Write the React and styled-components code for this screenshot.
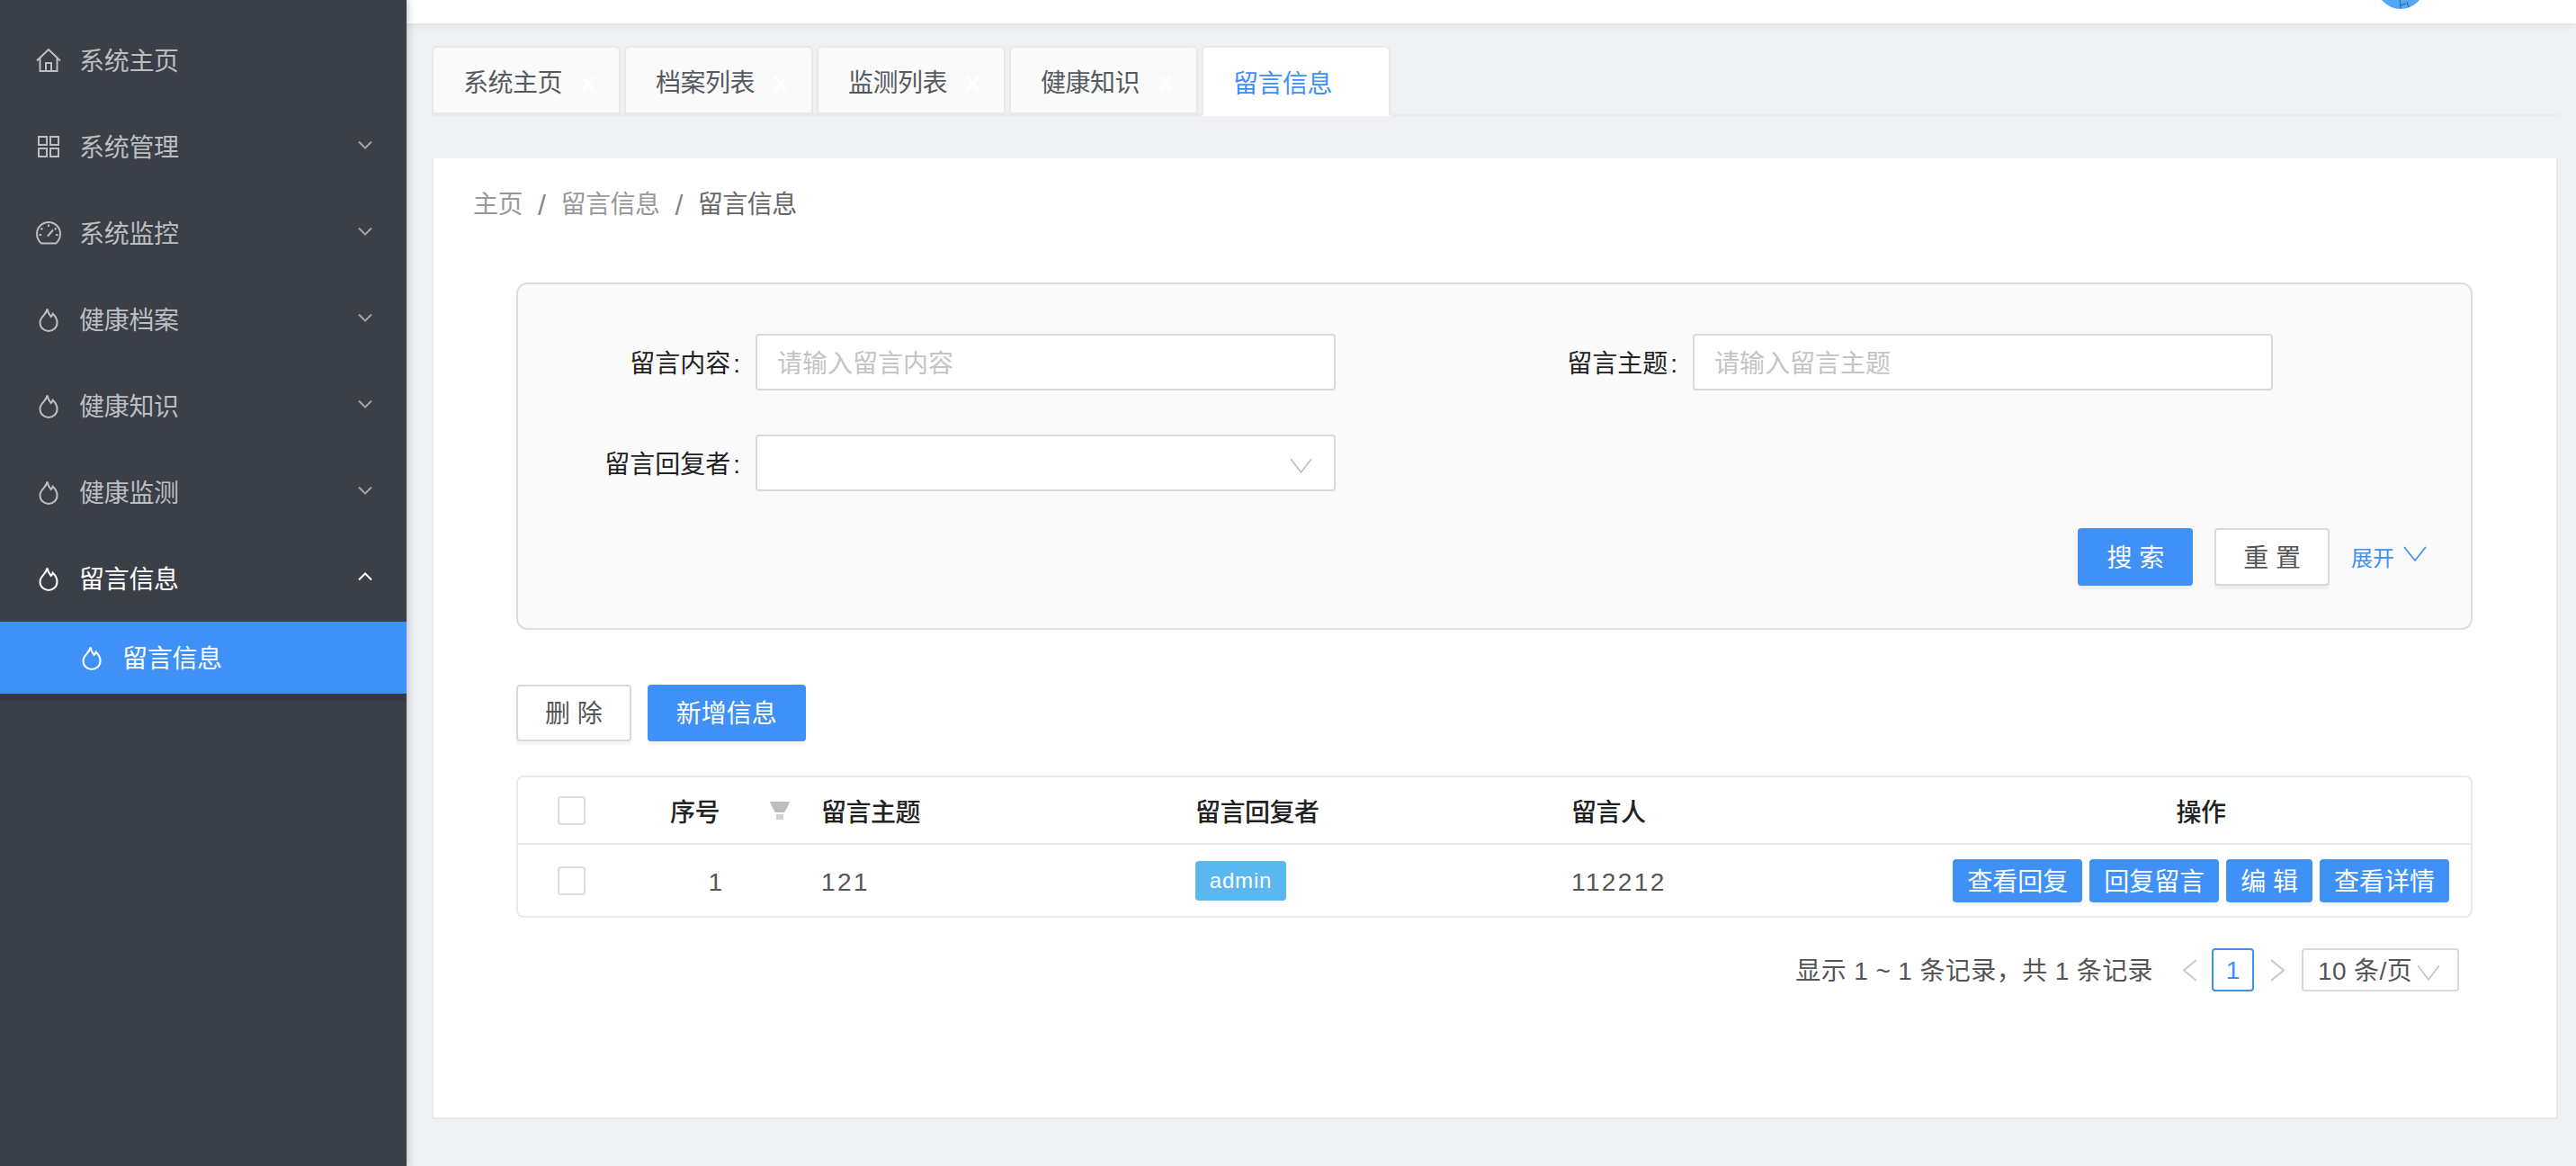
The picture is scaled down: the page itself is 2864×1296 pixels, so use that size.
import React from "react";
import styled, { createGlobalStyle } from "styled-components";

const GlobalStyle = createGlobalStyle`
  html, body {
    margin: 0;
    padding: 0;
    background: #f0f1f5;
  }
  body {
    font-family: "Liberation Sans", "Noto Sans CJK SC", sans-serif;
    font-size: 28px;
    overflow: hidden;
  }
  * {
    box-sizing: border-box;
  }
`;

const Layout = styled.div`
  display: flex;
  width: 2864px;
  height: 1296px;
  overflow: hidden;
`;

const Sidebar = styled.aside`
  flex: 0 0 452px;
  position: relative;
  z-index: 2;
  padding-top: 19px;
  background: #3a3f48;
  box-shadow: 2px 0 8px rgba(29, 35, 41, 0.22);
`;

const NavItem = styled.div`
  display: flex;
  align-items: center;
  height: 96px;
  padding: 0 38px 0 40px;
  color: ${(props) => (props.open ? "#fff" : "#bcbec2")};
  line-height: 1;
`;

const NavIcon = styled.span`
  display: flex;
  justify-content: center;
  flex: 0 0 28px;
  margin-right: 20px;
`;

const NavText = styled.span`
  flex: 1;
  padding-top: 3px;
  letter-spacing: -0.3px;
`;

const Chevron = styled.svg`
  width: 16px;
  height: 10px;
  margin-top: -4px;
  transform: ${(props) => (props.up ? "rotate(180deg)" : "none")};
`;

const SubItem = styled.div`
  display: flex;
  align-items: center;
  height: 80px;
  padding-left: 91px;
  background: #3f90f7;
  color: #fff;
  line-height: 1;
  box-shadow: 0 8px 0 #363b43;

  svg {
    margin-right: 23px;
  }
`;

const Main = styled.div`
  flex: 1;
  min-width: 0;
  display: flex;
  flex-direction: column;
`;

const Header = styled.header`
  flex: 0 0 26px;
  display: flex;
  justify-content: flex-end;
  padding-right: 168px;
  overflow: hidden;
  position: relative;
  z-index: 1;
  background: #fff;
  box-shadow: 0 2px 8px rgba(0, 0, 0, 0.08);
`;

const Avatar = styled.svg`
  flex: 0 0 54px;
  width: 54px;
  height: 54px;
  margin-top: -44px;
`;

const TabBar = styled.nav`
  display: flex;
  gap: 4px;
  height: 78px;
  margin: 25px 20px 0 28px;
  border-bottom: 2px solid #e8e9eb;
`;

const Tab = styled.div`
  display: flex;
  align-items: center;
  width: 210px;
  height: ${(props) => (props.active ? "78px" : "76px")};
  padding: 8px 0 0 33px;
  border: 2px solid #e8e9eb;
  border-bottom-color: ${(props) => (props.active ? "#fff" : "#e8e9eb")};
  border-radius: 6px 6px 0 0;
  background: ${(props) => (props.active ? "#fff" : "#fafafa")};
  color: ${(props) => (props.active ? "#3f90f7" : "#555a60")};
  line-height: 1;
  letter-spacing: -0.5px;
`;

const TabClose = styled.svg`
  width: 15px;
  height: 18px;
  margin-left: 21px;
`;

const Card = styled.section`
  flex: 0 0 1068px;
  margin: 47px 20px 0 28px;
  padding: 0 0 0 45px;
  border: 2px solid #e8e9eb;
  border-top: 0;
  background: #fff;
`;

const Breadcrumb = styled.div`
  display: flex;
  align-items: center;
  height: 100px;
  margin-left: -1px;
  padding-top: 4px;
  color: #999;
  line-height: 1;
  letter-spacing: -0.5px;

  b {
    font-weight: 400;
    color: #666;
  }
  i {
    font-style: normal;
    font-size: 32px;
    margin: 0 17px;
    color: #888;
  }
`;

const Panel = styled.div`
  width: 2175px;
  height: 386px;
  margin: 38px 0 0 47px;
  padding: 55px 49px 0 0;
  border: 2px solid #ddd;
  border-radius: 12px;
  background: #fafafa;
`;

const FormGrid = styled.div`
  display: grid;
  grid-template-columns: 1042px 1042px;
  row-gap: 49px;
`;

const Field = styled.label`
  display: flex;
  align-items: center;
  height: 63px;
`;

const FieldLabel = styled.span`
  flex: 0 0 247px;
  margin-right: 17px;
  padding-top: 5px;
  text-align: right;
  color: #222;
  line-height: 1;

  em {
    font-style: normal;
    margin-left: 3px;
  }
`;

const TextInput = styled.input`
  width: 645px;
  height: 63px;
  padding: 5px 22px 0;
  border: 2px solid #d9d9d9;
  border-radius: 4px;
  background: #fff;
  font: inherit;
  outline: none;

  &::placeholder {
    color: #c4c4c4;
    opacity: 1;
  }
`;

const SelectBox = styled.div`
  display: flex;
  align-items: center;
  justify-content: flex-end;
  width: 645px;
  height: 63px;
  padding: 5px 24px 0 0;
  border: 2px solid #d9d9d9;
  border-radius: 4px;
  background: #fff;
`;

const FormActions = styled.div`
  display: flex;
  align-items: center;
  justify-content: flex-end;
  margin-top: 41px;
`;

const Button = styled.button`
  display: inline-flex;
  align-items: center;
  justify-content: center;
  height: ${(props) => props.h || 64}px;
  padding: 3px ${(props) => props.pad || (props.primary ? 32 : 30)}px 0;
  margin-right: ${(props) => props.gap || 0}px;
  border: ${(props) => (props.primary ? "0" : "2px solid #d9d9d9")};
  border-radius: 4px;
  background: ${(props) => (props.primary ? "#3f90f7" : "#fff")};
  color: ${(props) => (props.primary ? "#fff" : "#555")};
  font: inherit;
  line-height: 1;
  white-space: pre;
  box-shadow: 0 4px 0 rgba(0, 0, 0, 0.04);
`;

const ExpandLink = styled.span`
  display: flex;
  align-items: center;
  margin-left: 24px;
  color: #3f90f7;
  font-size: 24px;
  line-height: 1;

  b {
    font-weight: 400;
    padding-top: 3px;
  }
  svg {
    margin-left: 10px;
    margin-top: -8px;
  }
`;

const Toolbar = styled.div`
  display: flex;
  margin: 61px 0 0 47px;
`;

const Table = styled.div`
  width: 2175px;
  margin: 38px 0 0 47px;
  border: 2px solid #e8e9eb;
  border-radius: 8px;
`;

const TableRow = styled.div`
  display: grid;
  grid-template-columns: 124px 213px 416px 418px 400px 1fr;
  align-items: center;
  height: ${(props) => props.h}px;
  padding-top: ${(props) => (props.head ? 0 : 1)}px;
  border-bottom: ${(props) => (props.head ? "2px solid #e8e9eb" : "0")};
  color: ${(props) => (props.head ? "#222" : "#555")};
  font-weight: ${(props) => (props.head ? 500 : 400)};
  line-height: 1;
`;

const CheckCell = styled.div`
  padding-left: 44px;
`;

const CheckBox = styled.span`
  display: block;
  width: 31px;
  height: 32px;
  border: 2px solid #dcdee2;
  border-radius: 4px;
  background: #fff;
`;

const IndexCell = styled.div`
  display: flex;
  align-items: center;

  span {
    flex: 0 0 ${(props) => (props.head ? 100 : 103)}px;
    padding-top: ${(props) => (props.head ? 6 : 4)}px;
    text-align: right;
    letter-spacing: ${(props) => (props.head ? "-0.5px" : "0")};
  }
  svg {
    margin-left: 56px;
  }
`;

const HeadCell = styled.div`
  padding-top: 6px;
  letter-spacing: -0.5px;
  text-align: ${(props) => (props.center ? "center" : "left")};
`;

const NumCell = styled.div`
  padding-top: 4px;
  letter-spacing: 2.4px;
`;

const Tag = styled.span`
  display: inline-flex;
  align-items: center;
  justify-content: center;
  width: 101px;
  height: 44px;
  border-radius: 4px;
  background: #5bb7f0;
  color: #fff;
  font-size: 24px;
  letter-spacing: 0.8px;
`;

const TagCell = styled.div`
  display: flex;
`;

const ActionCell = styled.div`
  display: flex;
  justify-content: flex-end;
  gap: 8px;
  padding-right: 24px;
`;

const Pagination = styled.div`
  display: flex;
  align-items: center;
  justify-content: flex-end;
  width: 2160px;
  margin: 34px 0 0 47px;
  color: #555;
  line-height: 1;
`;

const PageSummary = styled.span`
  margin-right: 32px;
  padding-top: 3px;
  white-space: pre;
  letter-spacing: 0.4px;
`;

const PageArrow = styled.svg`
  width: 17px;
  height: 25px;
`;

const PageNumber = styled.span`
  display: flex;
  align-items: center;
  justify-content: center;
  width: 47px;
  height: 48px;
  margin: 0 18px 0 16px;
  padding-top: 2px;
  border: 2px solid #3f90f7;
  border-radius: 4px;
  color: #3f90f7;
`;

const PageSize = styled.div`
  display: flex;
  align-items: center;
  width: 175px;
  height: 48px;
  margin-left: 18px;
  padding-left: 16px;
  border: 2px solid #d9d9d9;
  border-radius: 4px;
  white-space: pre;

  span {
    padding-top: 3px;
    letter-spacing: 0.4px;
  }
  svg {
    margin-left: 5px;
    margin-top: 6px;
  }
`;

const HomeIcon = () => (
  <svg width="28" height="26" viewBox="0 0 28 26" fill="none" stroke="currentColor" strokeWidth="2">
    <path d="M1 13.5 14 1l13 12.5M4.5 11v14h19V11M11 25v-9h6v9" />
  </svg>
);

const AppsIcon = () => (
  <svg width="24" height="24" viewBox="0 0 24 24" fill="none" stroke="currentColor" strokeWidth="2">
    <rect x="1" y="1" width="9" height="9" />
    <rect x="14" y="1" width="9" height="9" />
    <rect x="1" y="14" width="9" height="9" />
    <rect x="14" y="14" width="9" height="9" />
  </svg>
);

const GaugeIcon = () => (
  <svg width="28" height="26" viewBox="0 0 28 26" fill="none" stroke="currentColor" strokeWidth="2">
    <path d="M6 24.5h16C25 22 27 18.5 27 14 27 6.8 21.2 1 14 1S1 6.8 1 14c0 4.5 2 8 5 10.5Z" />
    <path d="M13 16.5 19 9.5M14 3.5V6M5.5 7.5 7.2 9.2M22.5 7.5 20.8 9.2M3.5 15H6M22 15h2.5" />
  </svg>
);

const FlameIcon = () => (
  <svg width="22" height="27" viewBox="0 0 22 27" fill="none" stroke="currentColor" strokeWidth="2">
    <path d="M9.5 1.5C10 5 11.5 7.5 13.7 10c1-.8 1.7-2 2-3.3C18.7 9.6 20.5 13 20.5 16.5 20.5 22 16.2 26 11 26S1.5 22 1.5 16.5C1.5 10.5 8.3 8 9.5 1.5Z" />
  </svg>
);

const FilterIcon = () => (
  <svg width="22" height="20" viewBox="0 0 22 20">
    <path d="M0 0h22l-3 7-3 5H6L3 7Z" fill="#bdbdbd" />
    <rect x="7" y="14" width="8" height="6" fill="#d2d2d2" />
  </svg>
);

const ThinArrow = ({ color, w = 25, h = 17 }) => (
  <svg width={w} height={h} viewBox="0 0 25 17" fill="none" stroke={color} strokeWidth="1.6" preserveAspectRatio="none">
    <path d="M1 1 12.5 16 24 1" />
  </svg>
);

const menu = [
  { label: "系统主页", icon: <HomeIcon /> },
  { label: "系统管理", icon: <AppsIcon />, arrow: true },
  { label: "系统监控", icon: <GaugeIcon />, arrow: true },
  { label: "健康档案", icon: <FlameIcon />, arrow: true },
  { label: "健康知识", icon: <FlameIcon />, arrow: true },
  { label: "健康监测", icon: <FlameIcon />, arrow: true },
  { label: "留言信息", icon: <FlameIcon />, arrow: true, open: true },
];

const tabs = ["系统主页", "档案列表", "监测列表", "健康知识", "留言信息"];

function App() {
  return (
    <Layout>
      <GlobalStyle />
      <Sidebar>
        {menu.map((item) => (
          <NavItem key={item.label} open={item.open}>
            <NavIcon>{item.icon}</NavIcon>
            <NavText>{item.label}</NavText>
            {item.arrow && (
              <Chevron up={item.open} viewBox="0 0 16 10" fill="none" stroke="currentColor" strokeWidth="2" style={{ opacity: item.open ? 1 : 0.8 }}>
                <path d="M1 1.5 8 8.5l7-7" />
              </Chevron>
            )}
          </NavItem>
        ))}
        <SubItem>
          <FlameIcon />
          <NavText>留言信息</NavText>
        </SubItem>
      </Sidebar>
      <Main>
        <Header>
          <Avatar viewBox="0 0 54 54">
            <circle cx="27" cy="27" r="27" fill="#53a8f5" />
            <path d="M26 44l1 9M34 46l2 6M26 50l7-2" stroke="#2b5fa8" strokeWidth="1" fill="none" />
          </Avatar>
        </Header>
        <TabBar>
          {tabs.map((tab, index) => (
            <Tab key={tab} active={index === tabs.length - 1}>
              {tab}
              <TabClose viewBox="0 0 15 18" fill="none" stroke="#fff" strokeWidth="2.2">
                <path d="M1 1l13 16M14 1 1 17" />
              </TabClose>
            </Tab>
          ))}
        </TabBar>
        <Card>
          <Breadcrumb>
            主页<i>/</i>留言信息<i>/</i><b>留言信息</b>
          </Breadcrumb>
          <Panel>
            <FormGrid>
              <Field>
                <FieldLabel>留言内容<em>:</em></FieldLabel>
                <TextInput placeholder="请输入留言内容" />
              </Field>
              <Field>
                <FieldLabel>留言主题<em>:</em></FieldLabel>
                <TextInput placeholder="请输入留言主题" />
              </Field>
              <Field>
                <FieldLabel>留言回复者<em>:</em></FieldLabel>
                <SelectBox>
                  <ThinArrow color="#bdbdbd" />
                </SelectBox>
              </Field>
            </FormGrid>
            <FormActions>
              <Button primary gap={24}>搜 索</Button>
              <Button>重 置</Button>
              <ExpandLink>
                <b>展开</b>
                <ThinArrow color="#3f90f7" w={26} />
              </ExpandLink>
            </FormActions>
          </Panel>
          <Toolbar>
            <Button h={63} gap={18}>删 除</Button>
            <Button primary h={63}>新增信息</Button>
          </Toolbar>
          <Table>
            <TableRow head h={75}>
              <CheckCell><CheckBox /></CheckCell>
              <IndexCell head>
                <span>序号</span>
                <FilterIcon />
              </IndexCell>
              <HeadCell>留言主题</HeadCell>
              <HeadCell>留言回复者</HeadCell>
              <HeadCell>留言人</HeadCell>
              <HeadCell center>操作</HeadCell>
            </TableRow>
            <TableRow h={79}>
              <CheckCell><CheckBox /></CheckCell>
              <IndexCell><span>1</span></IndexCell>
              <NumCell>121</NumCell>
              <TagCell><Tag>admin</Tag></TagCell>
              <NumCell>112212</NumCell>
              <ActionCell>
                <Button primary h={48} pad={16}>查看回复</Button>
                <Button primary h={48} pad={16}>回复留言</Button>
                <Button primary h={48} pad={16}>编 辑</Button>
                <Button primary h={48} pad={16}>查看详情</Button>
              </ActionCell>
            </TableRow>
          </Table>
          <Pagination>
            <PageSummary>显示 1 ~ 1 条记录，共 1 条记录</PageSummary>
            <PageArrow viewBox="0 0 17 25" fill="none" stroke="#c8c8c8" strokeWidth="2">
              <path d="M16 1 2 12.5 16 24" />
            </PageArrow>
            <PageNumber>1</PageNumber>
            <PageArrow viewBox="0 0 17 25" fill="none" stroke="#c8c8c8" strokeWidth="2">
              <path d="M1 1 15 12.5 1 24" />
            </PageArrow>
            <PageSize>
              <span>10 条/页</span>
              <ThinArrow color="#c4c4c4" w={26} h={18} />
            </PageSize>
          </Pagination>
        </Card>
      </Main>
    </Layout>
  );
}

export default App;
